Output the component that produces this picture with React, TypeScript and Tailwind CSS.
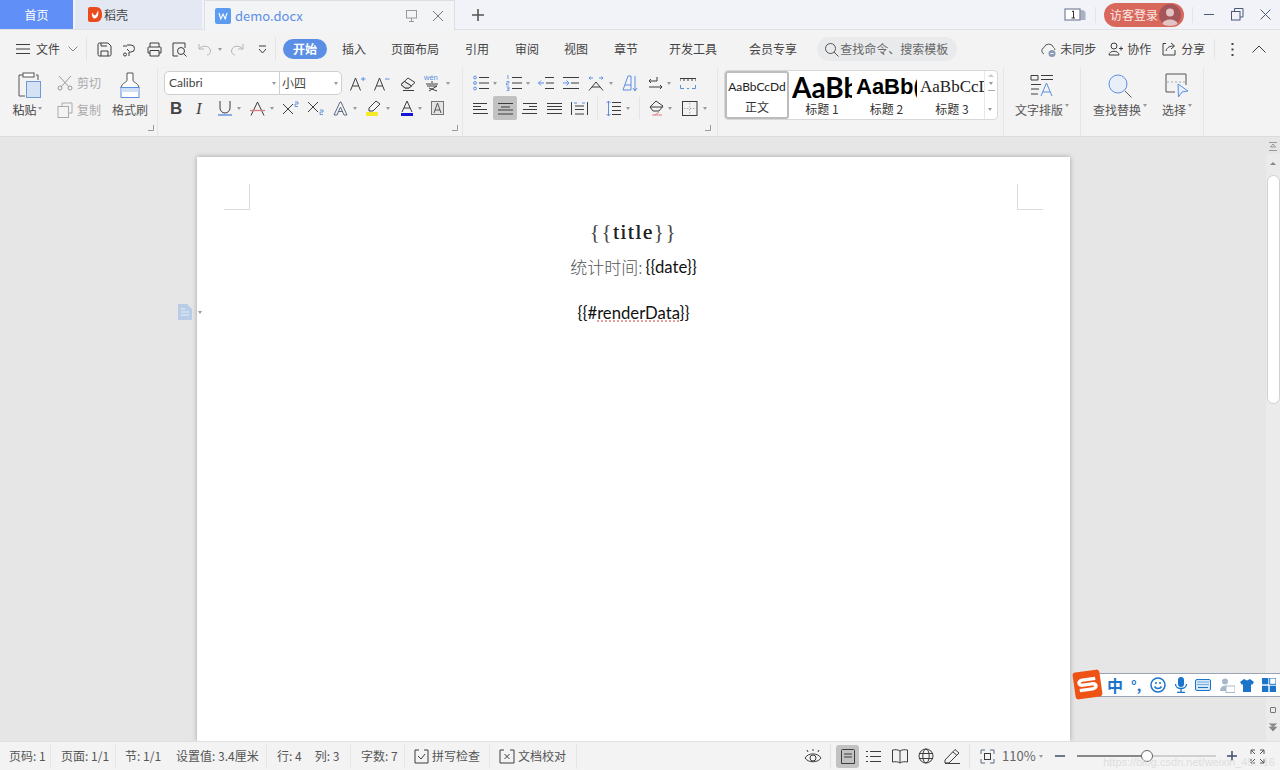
import type { ReactNode } from "react"

const BLUE = "#5b8fe0"
const INK = "#3c3c3c"

function Ic({ w = 16, h = 16, className = "", children }: { w?: number; h?: number; className?: string; children: ReactNode }) {
  return (
    <svg width={w} height={h} viewBox={`0 0 ${w} ${h}`} fill="none" stroke={INK} strokeWidth="1" className={`shrink-0 ${className}`}>
      {children}
    </svg>
  )
}

// small grey dropdown triangle
function Caret({ className = "" }: { className?: string }) {
  return <span className={`inline-block w-0 h-0 shrink-0 border-x-[2.5px] border-x-transparent border-t-[3px] border-t-[#999] ${className}`} />
}

function Sep({ className = "" }: { className?: string }) {
  return <div className={`w-px bg-[#e4e4e4] shrink-0 ${className}`} />
}

function TitleBar() {
  return (
    <div className="h-[30px] flex bg-[#f1f3f8] border-b border-[#dfe1e6] shrink-0">
      <div className="w-[73px] bg-[#5f8ff7] text-white text-[12px] flex items-center justify-center">首页</div>
      <div className="w-[127px] ml-[2px] bg-[#e3e8f2] flex items-center pl-[13px] text-[12px] text-[#444]">
        <svg width="15" height="15" viewBox="0 0 15 15" className="mr-[1px]">
          <path d="M0 2 A2 2 0 0 1 2 0 H8 C12 0 14 3 14 7.5 C14 12 12 15 8 15 H2 A2 2 0 0 1 0 13 Z" fill="#ea4a1c" />
          <path d="M4 5.5 C3.5 9 5 12 7 11.5 C10 10.5 11 7 10 3.5 C9 6 8 7.5 7 8.5 C6 8 5 7 4 5.5 Z" fill="#fff" />
        </svg>
        稻壳
      </div>
      <div className="w-[251px] ml-[2px] h-[30px] bg-[#f3f4f6] border border-b-0 border-[#dcdfe5] flex items-center pl-[10px] pr-[10px] text-[13px] text-[#5b8fe6]">
        <svg width="16" height="16" viewBox="0 0 16 16" className="mr-[4px]">
          <rect width="16" height="16" rx="2" fill="#5b9bf0" />
          <path d="M4 5 L5.8 11 L8 6 L10.2 11 L12 5" stroke="#fff" strokeWidth="1.1" fill="none" />
        </svg>
        demo.docx
        <Ic w={12} h={12} className="ml-auto mr-[14px]">
          <rect x="0.5" y="0.5" width="10" height="7.5" stroke="#999" />
          <path d="M5.5 8 V11 M3 11.5 H8" stroke="#999" />
        </Ic>
        <Ic w={12} h={12}>
          <path d="M1 1 L11 11 M11 1 L1 11" stroke="#777" />
        </Ic>
      </div>
      <Ic w={12} h={12} className="ml-[17px] mt-[9px]">
        <path d="M6 0 V12 M0 6 H12" stroke="#555" strokeWidth="1.6" />
      </Ic>
      <div className="ml-auto flex items-center">
        <svg width="22" height="13" viewBox="0 0 22 13" className="mr-[9px]" fill="none">
          <path d="M16 2 H19 L21.5 4 V12 H16 Z" fill="#a9b1c2" />
          <rect x="1" y="1" width="15" height="11" fill="#fff" stroke="#8a93a8" strokeWidth="1.4" />
          <path d="M8 3.5 L9.5 3 V10 M7.5 10 H11" stroke="#333" />
        </svg>
        <Sep className="h-[16px] mr-[8px]" />
        <div className="w-[80px] h-[24px] rounded-full bg-[#d9685c] flex items-center pl-[6px] text-[12px] text-[#fbe9e6]">
          访客登录
          <svg width="22" height="22" viewBox="0 0 22 22" className="ml-[1px]">
            <circle cx="11" cy="11" r="11" fill="#a5565a" />
            <circle cx="11" cy="8.5" r="4" fill="#e3c3c3" />
            <path d="M3.5 20 C4 14 18 14 18.5 20 C15 22.5 7 22.5 3.5 20 Z" fill="#e3c3c3" />
          </svg>
        </div>
        <Sep className="h-[16px] ml-[8px]" />
        <Ic w={11} h={11} className="ml-[11px]">
          <path d="M0 5.5 H10" stroke="#4a5a78" />
        </Ic>
        <Ic w={13} h={13} className="ml-[16px]">
          <rect x="0.5" y="3.5" width="8.5" height="8.5" stroke="#4a5a78" />
          <path d="M3.5 3.5 V0.5 H12 V9 H9" stroke="#4a5a78" />
        </Ic>
        <Ic w={11} h={11} className="ml-[16px] mr-[9px]">
          <path d="M0.5 0.5 L10.5 10.5 M10.5 0.5 L0.5 10.5" stroke="#4a5a78" />
        </Ic>
      </div>
    </div>
  )
}

function MenuBar() {
  const tabs = [
    { t: "插入", c: "ml-[15px]" },
    { t: "页面布局", c: "ml-[25px]" },
    { t: "引用", c: "ml-[26px]" },
    { t: "审阅", c: "ml-[26px]" },
    { t: "视图", c: "ml-[25px]" },
    { t: "章节", c: "ml-[26px]" },
    { t: "开发工具", c: "ml-[31px]" },
    { t: "会员专享", c: "ml-[32px]" },
  ]
  return (
    <div className="h-[38px] flex items-center text-[12px] text-[#444] shrink-0">
      <Ic w={14} h={12} className="ml-[16px]">
        <path d="M0 1.5 H14 M0 6 H14 M0 10.5 H14" />
      </Ic>
      <span className="ml-[6px] w-[24px]">文件</span>
      <Ic w={10} h={6} className="ml-[8px]">
        <path d="M0.5 0.5 L5 5 L9.5 0.5" stroke="#888" />
      </Ic>
      <Sep className="h-[24px] ml-[8px]" />
      <Ic w={15} h={15} className="ml-[10px]">
        <path d="M1 2.5 A1.5 1.5 0 0 1 2.5 1 H11 L14 4 V12.5 A1.5 1.5 0 0 1 12.5 14 H2.5 A1.5 1.5 0 0 1 1 12.5 Z M4 14 V9 H11 V14 M4 1 V4 H10" />
      </Ic>
      <Ic w={15} h={15} className="ml-[10px]">
        <path d="M5 3 H9 A3.5 3.5 0 0 1 9 10 H7 V14 M1 4 H5 M3 11 A1.5 1.5 0 1 0 3 14 A1.5 1.5 0 1 0 3 11 M5 7 L7 9" />
      </Ic>
      <Ic w={15} h={15} className="ml-[10px]">
        <path d="M3 5 V1 H12 V5 M3 11 H1 V5.5 A1 1 0 0 1 2 5 H13 A1 1 0 0 1 14 5.5 V11 H12 M3 8.5 H12 V14 H3 Z" />
      </Ic>
      <Ic w={15} h={15} className="ml-[10px]">
        <path d="M6 14 H1 V1 H13 V6" />
        <circle cx="9" cy="9" r="3.5" />
        <path d="M11.5 11.5 L14.5 14.5" />
      </Ic>
      <Ic w={14} h={13} className="ml-[11px]">
        <path d="M1 1 V6 H6 M1 6 C4 2 12 2 12.5 8 C12.5 10 11 12 9 12" stroke="#b5b5b5" />
      </Ic>
      <Caret className="ml-[6px]" />
      <Ic w={14} h={13} className="ml-[8px]">
        <path d="M13 1 V6 H8 M13 6 C10 2 2 2 1.5 8 C1.5 10 3 12 5 12" stroke="#b5b5b5" />
      </Ic>
      <Ic w={9} h={9} className="ml-[14px]">
        <path d="M1 1 H8 M1 4 L4.5 8 L8 4" />
      </Ic>
      <Sep className="h-[24px] ml-[8px]" />
      <div className="ml-[7px] w-[44px] h-[20px] rounded-full bg-[#5b8fe6] text-white font-bold flex items-center justify-center">开始</div>
      {tabs.map((x) => (
        <span key={x.t} className={x.c}>{x.t}</span>
      ))}
      <div className="ml-[20px] w-[140px] h-[24px] rounded-full bg-[#e9eaec] flex items-center pl-[7px] text-[#666]">
        <Ic w={15} h={15} className="mr-[1px]">
          <circle cx="6.5" cy="6.5" r="5" stroke="#555" />
          <path d="M10 10 L14.5 14.5" stroke="#555" />
        </Ic>
        查找命令、搜索模板
      </div>
      <Ic w={17} h={15} className="ml-[83px]">
        <path d="M4 12 A3.5 3.5 0 0 1 4 5.5 A5 5 0 0 1 13.5 5.5 A3.5 3.5 0 0 1 15 8" stroke="#555" />
        <circle cx="12" cy="11.5" r="3.5" fill="#8a9bb5" stroke="none" />
        <path d="M10.5 11.5 H13.5" stroke="#fff" />
      </Ic>
      <span className="ml-[3px]">未同步</span>
      <Ic w={15} h={14} className="ml-[12px]">
        <circle cx="6" cy="4" r="3" />
        <path d="M1 13 C1 8 11 8 11 13 Z M11 6.5 H15 M13 4.5 V8.5" />
      </Ic>
      <span className="ml-[4px]">协作</span>
      <Ic w={15} h={14} className="ml-[11px]">
        <path d="M4 1.5 H1 V13 H13 V8 M4 9 C5 5 8 4 12 4 M9 1 L12.5 4 L9 7" />
      </Ic>
      <span className="ml-[4px]">分享</span>
      <Sep className="h-[20px] ml-[9px]" />
      <Ic w={3} h={13} className="ml-[16px]">
        <path d="M1.5 0 V2 M1.5 5.5 V7.5 M1.5 11 V13" stroke="#444" strokeWidth="2" />
      </Ic>
      <Ic w={14} h={8} className="ml-[18px]">
        <path d="M0.5 7.5 L7 1 L13.5 7.5" />
      </Ic>
    </div>
  )
}

function Launcher({ className = "" }: { className?: string }) {
  return (
    <Ic w={6} h={6} className={`absolute bottom-[5px] ${className}`}>
      <path d="M5.5 0 V5.5 H0" stroke="#999" />
    </Ic>
  )
}

function ClipboardGroup() {
  return (
    <div className="relative w-[158px] shrink-0 h-full flex border-r border-[#e6e6e6] text-[12px] text-[#444]">
      <div className="w-[49px] flex flex-col items-center pt-[4px] pl-[10px]">
        <svg width="24" height="27" viewBox="0 0 24 27" fill="none">
          <path d="M6 3 H1 V24 H7" stroke="#555" />
          <path d="M18 3 H20 V8" stroke="#555" />
          <rect x="5" y="1" width="11" height="4" stroke="#555" fill="#fff" />
          <rect x="8.5" y="9.5" width="14" height="16" fill="#d5e2f4" stroke="#6f9ad8" />
        </svg>
        <div className="mt-[2px] flex items-center w-[36px] pl-[1px]">粘贴<Caret className="ml-[1px] mb-[4px]" /></div>
      </div>
      <div className="w-[59px] flex flex-col pl-[8px] text-[#aaa]">
        <div className="h-[26px] mt-[2px] flex items-center">
          <Ic w={16} h={16}>
            <path d="M2 1 L12 12 M14 1 L4 12" stroke="#999" />
            <circle cx="3" cy="13" r="2" stroke="#999" />
            <circle cx="13" cy="13" r="2" stroke="#999" />
          </Ic>
          <span className="ml-[4px]">剪切</span>
        </div>
        <div className="h-[26px] mt-[1px] flex items-center">
          <Ic w={16} h={16}>
            <path d="M5 4 V1 H15 V11 H12" stroke="#aaa" />
            <rect x="1" y="4.5" width="10.5" height="11" stroke="#aaa" />
          </Ic>
          <span className="ml-[4px]">复制</span>
        </div>
      </div>
      <div className="flex flex-col items-center w-[44px] pt-[4px]">
        <svg width="20" height="27" viewBox="0 0 20 27" fill="none">
          <path d="M7 1 H13 V8 C13 11 18 10 19 16 H1 C2 10 7 11 7 8 Z" stroke="#555" fill="#fff" />
          <rect x="1" y="15.5" width="18" height="10" stroke="#5b8fe0" fill="#fff" />
          <rect x="1.5" y="16" width="17" height="4" fill="#cfdff5" />
        </svg>
        <span className="mt-[2px] whitespace-nowrap text-[#555]">格式刷</span>
      </div>
      <Launcher className="right-[3px]" />
    </div>
  )
}

function FontGroup() {
  return (
    <div className="relative w-[305px] shrink-0 h-full border-r border-[#e6e6e6] pl-[6px] text-[#444]">
      <div className="flex items-center h-[24px] mt-[3px]">
        <div className="w-[178px] h-[24px] bg-white border border-[#cfcfcf] rounded-[5px] flex items-center text-[12px]">
          <div className="w-[115px] h-full flex items-center pl-[4px] border-r border-[#cfcfcf] font-['Lato','Liberation_Sans',sans-serif]">
            Calibri
            <Caret className="ml-auto mr-[3px]" />
          </div>
          <div className="flex-1 h-full flex items-center pl-[2px]">
            小四
            <Caret className="ml-auto mr-[3px]" />
          </div>
        </div>
        <Ic w={16} h={15} className="ml-[8px]">
          <path d="M0.5 14.5 L5.5 2 L10.5 14.5 M2.5 10 H8.5" />
          <path d="M11 3 H15.5 M13.2 1 V5" stroke={BLUE} />
        </Ic>
        <Ic w={16} h={15} className="ml-[8px]">
          <path d="M0.5 14.5 L5.5 2 L10.5 14.5 M2.5 10 H8.5" />
          <path d="M11 3 H15.5" stroke={BLUE} />
        </Ic>
        <Ic w={16} h={15} className="ml-[10px]">
          <path d="M1 8.5 L8 2 L15 6.5 L9 12 H5 Z M4.5 5.5 L11.5 10" />
          <path d="M1 8.5 L5 12 H9 L11.5 10 L4.5 5.5 Z" fill="#e8e8e8" />
          <path d="M3 14.5 H14" />
        </Ic>
        <svg width="17" height="18" viewBox="0 0 17 18" fill="none" className="ml-[8px]">
          <text x="0" y="6" fontSize="7.5" fill={BLUE} stroke="none" fontFamily="Liberation Sans">wén</text>
          <path d="M8 7 V9 M2 10 H14 M3 12 H13 L5 17 M5 14 L13 17" stroke={INK} />
        </svg>
        <Caret className="ml-[5px]" />
      </div>
      <div className="flex items-center h-[24px] mt-[1px]">
        <span className="ml-[6px] w-[12px] font-bold text-[17px] leading-none font-['Liberation_Sans',sans-serif]">B</span>
        <span className="ml-[14px] w-[10px] italic text-[17px] leading-none font-['Liberation_Serif',serif]">I</span>
        <Ic w={14} h={16} className="ml-[12px]">
          <path d="M2 1 V8 A5 5 0 0 0 12 8 V1" />
          <path d="M0 15 H14" stroke={BLUE} strokeWidth="1.4" />
        </Ic>
        <Caret className="ml-[5px]" />
        <Ic w={15} h={15} className="ml-[9px]">
          <path d="M1 14.5 L7.5 1 L14 14.5" />
          <path d="M0 9.5 H15" stroke="#d98080" strokeWidth="1.3" />
        </Ic>
        <Caret className="ml-[5px]" />
        <Ic w={17} h={14} className="ml-[8px]">
          <path d="M1 3 L11 13 M11 3 L1 13" />
          <path d="M13 1 H16 V3 H13 V5.5 H16" stroke={BLUE} strokeWidth="0.9" />
        </Ic>
        <Ic w={17} h={15} className="ml-[8px]">
          <path d="M1 1 L11 11 M11 1 L1 11" />
          <path d="M13 9 H16 V11 H13 V13.5 H16" stroke={BLUE} strokeWidth="0.9" />
        </Ic>
        <Ic w={15} h={15} className="ml-[9px]">
          <path d="M1 14 L7 1 H8 L14 14 H11 L7.5 6 L4 14 Z M5 10.5 H10" stroke="#5f6b85" />
        </Ic>
        <Caret className="ml-[5px]" />
        <Ic w={15} h={16} className="ml-[9px]">
          <path d="M3 8 L10 1 L14 4 L7 11 H3 Z" />
          <rect x="0" y="12" width="12" height="4" fill="#f5ea2a" stroke="none" />
        </Ic>
        <Caret className="ml-[5px]" />
        <Ic w={12} h={16} className="ml-[11px]">
          <path d="M1 12 L6 1 L11 12 M3 8 H9" />
          <rect x="0" y="13" width="12" height="3" fill="#1616d8" stroke="none" />
        </Ic>
        <Caret className="ml-[5px]" />
        <Ic w={13} h={14} className="ml-[9px]">
          <rect x="0.5" y="0.5" width="12" height="13" stroke="#777" fill="#e4e4e4" />
          <path d="M3 12 L6.5 2 L10 12 M4 9 H9" stroke="#555" />
        </Ic>
      </div>
      <Launcher className="right-[4px]" />
    </div>
  )
}

function ListIc({ marks, className = "" }: { marks: ReactNode; className?: string }) {
  return (
    <Ic w={17} h={16} className={className}>
      {marks}
      <path d="M6 2.5 H16 M6 8 H16 M6 13.5 H16" />
    </Ic>
  )
}

function AlignIc({ d, className = "" }: { d: string; className?: string }) {
  return (
    <Ic w={15} h={13} className={className}>
      <path d={d} />
    </Ic>
  )
}

function ParagraphGroup() {
  const dots = (
    <>
      <circle cx="2" cy="2.5" r="1.4" stroke={BLUE} />
      <circle cx="2" cy="8" r="1.4" stroke={BLUE} />
      <circle cx="2" cy="13.5" r="1.4" stroke={BLUE} />
    </>
  )
  const nums = (
    <path d="M1 1 L2 0.5 V4 M0.5 6.5 H3 V8 H0.5 V10 H3 M0.5 12 H3 V15.5 H0.5 M1 13.7 H3" stroke={BLUE} strokeWidth="0.8" />
  )
  return (
    <div className="relative w-[255px] shrink-0 h-full border-r border-[#e6e6e6] pl-[10px]">
      <div className="flex items-center h-[24px] mt-[3px]">
        <ListIc marks={dots} />
        <Caret className="ml-[3px]" />
        <ListIc marks={nums} className="ml-[9px]" />
        <Caret className="ml-[3px]" />
        <Ic w={16} h={14} className="ml-[8px]">
          <path d="M7 1.5 H16 M7 12.5 H16 M8 7 H16" />
          <path d="M0.5 7 H6 M3 4.5 L0.5 7 L3 9.5" stroke={BLUE} />
        </Ic>
        <Ic w={16} h={14} className="ml-[9px]">
          <path d="M0 1.5 H16 M0 12.5 H16 M8 7 H16" />
          <path d="M0 7 H6 M3.5 4.5 L6 7 L3.5 9.5" stroke={BLUE} />
        </Ic>
        <Ic w={16} h={15} className="ml-[9px]">
          <path d="M1 14.5 L8 6 L15 14.5 M4 11 H12" />
          <path d="M1 2 H5 M11 2 H15 M2.5 0.5 L1 2 L2.5 3.5 M13.5 0.5 L15 2 L13.5 3.5" stroke={BLUE} />
        </Ic>
        <Caret className="ml-[5px]" />
        <Ic w={16} h={17} className="ml-[9px]">
          <path d="M1 15 L6 1 H9 V15 Z M3 10 H9" stroke={BLUE} />
          <path d="M13 1 V16 M11 13 L13 16 L15 13" stroke={BLUE} />
        </Ic>
        <Ic w={16} h={15} className="ml-[10px]">
          <path d="M9 1 V5 H1 M3 3 L1 5 L3 7 M1 11 H14 M12 9 L14 11 L12 13" />
        </Ic>
        <Caret className="ml-[3px]" />
        <Ic w={16} h={11} className="ml-[9px]">
          <path d="M0 0.5 H16 M0 0.5 V3 M4 0.5 V3 M8 0.5 V3 M12 0.5 V3 M16 0.5 V3" />
          <path d="M0.5 7 V10.5 H4 M15.5 7 V10.5 H12 M7 10.5 H9" stroke={BLUE} />
        </Ic>
      </div>
      <div className="flex items-center h-[24px] mt-[1px]">
        <AlignIc d="M0 1.5 H14 M0 4.5 H8 M0 7.5 H14 M0 11.5 H15" />
        <div className="w-[24px] h-[24px] ml-[5px] rounded-[2px] bg-[#c2c2c2] flex items-center justify-center">
          <AlignIc d="M0 1.5 H15 M3 5 H12 M0 8 H15 M0 12 H15" />
        </div>
        <AlignIc d="M1 1.5 H15 M7 4.5 H15 M1 7.5 H15 M0 11.5 H15" className="ml-[5px]" />
        <AlignIc d="M0 1.5 H15 M0 4.5 H15 M0 7.5 H15 M0 11.5 H15" className="ml-[10px]" />
        <Ic w={17} h={15} className="ml-[9px]">
          <path d="M0.5 1 V14 M16.5 1 V14 M4 5 H13 M4 8.5 H13 M4 13 H13" />
          <path d="M3 2 H6 M11 2 H14" stroke={BLUE} />
        </Ic>
        <Sep className="h-[22px] ml-[9px]" />
        <Ic w={15} h={17} className="ml-[8px]">
          <path d="M6 2.5 H15 M6 6.5 H15 M6 10.5 H15 M6 14.5 H15" />
          <path d="M2.5 1 V16 M0.5 3 L2.5 1 L4.5 3 M0.5 14 L2.5 16 L4.5 14" stroke={BLUE} />
        </Ic>
        <Caret className="ml-[5px]" />
        <Sep className="h-[22px] ml-[9px]" />
        <Ic w={16} h={16} className="ml-[9px]">
          <path d="M1 7 L7 1 L14 6 L10 11 H4 Z M1 7 H14" />
          <path d="M3 15 H13 M6 15 L10 12" stroke="#d98080" />
        </Ic>
        <Caret className="ml-[3px]" />
        <Ic w={16} h={15} className="ml-[10px]">
          <rect x="0.5" y="0.5" width="14.5" height="14" />
          <path d="M7.7 2 V13 M2 7.5 H13.5" stroke="#aaa" strokeDasharray="1.5 1.5" />
        </Ic>
        <Caret className="ml-[5px]" />
      </div>
      <Launcher className="right-[6px]" />
    </div>
  )
}

function StyleGallery() {
  const label = "text-[12px] leading-none text-[#333] shrink-0"
  return (
    <div className="ml-[6px] mt-[2px] w-[274px] h-[50px] shrink-0 bg-white border border-[#d8d8d8] rounded-[4px] flex">
      <div className="w-[64px] h-[48px] border-2 border-[#bcbcbc] rounded-[3px] flex flex-col items-center overflow-hidden">
        <span className="text-[12px] leading-[16px] mt-[6px] font-['Lato','Liberation_Sans',sans-serif] text-[#222]">AaBbCcDd</span>
        <span className="text-[12px] leading-none text-[#333] mt-[6px]">正文</span>
      </div>
      <div className="w-[60px] ml-[3px] flex flex-col items-center overflow-hidden">
        <span className="h-[32px] self-start text-[28px] leading-[32px] font-bold text-black whitespace-nowrap font-['Lato','Liberation_Sans',sans-serif]">AaBb</span>
        <span className={label}>标题 1</span>
      </div>
      <div className="w-[61px] ml-[4px] flex flex-col items-center overflow-hidden">
        <span className="h-[32px] self-start text-[22px] leading-[32px] font-bold text-black whitespace-nowrap font-['Liberation_Sans',sans-serif]">AaBb(</span>
        <span className={label}>标题 2</span>
      </div>
      <div className="w-[64px] ml-[3px] flex flex-col items-center overflow-hidden">
        <span className="h-[32px] self-start text-[17px] leading-[32px] text-[#222] whitespace-nowrap font-['Liberation_Serif',serif]">AaBbCcD</span>
        <span className={label}>标题 3</span>
      </div>
      <div className="w-[13px] ml-auto border-l border-[#e8e8e8] flex flex-col items-center justify-around text-[#bbb]">
        <span className="w-0 h-0 border-x-[3px] border-x-transparent border-b-[3px] border-b-[#ccc]" />
        <Caret />
        <span className="w-[7px] border-t border-[#aaa] pt-[1px]"><Caret className="block mx-auto" /></span>
      </div>
    </div>
  )
}

function BigButton({ label, width, children }: { label: string; width: string; children: ReactNode }) {
  return (
    <div className={`flex flex-col items-center shrink-0 pt-[4px] text-[12px] text-[#555] ${width}`}>
      <div className="h-[27px] flex items-center">{children}</div>
      <div className="mt-[2px] flex whitespace-nowrap">{label}<Caret className="ml-[2px] mt-[3px]" /></div>
    </div>
  )
}

function Ribbon() {
  return (
    <div className="h-[69px] flex shrink-0 border-b border-[#dcdcdc] shadow-[0_1px_2px_rgba(0,0,0,0.06)] relative">
      <ClipboardGroup />
      <FontGroup />
      <ParagraphGroup />
      <StyleGallery />
      <div className="ml-[5px] w-[78px] border-x border-[#e6e6e6] h-full flex justify-center shrink-0">
        <BigButton label="文字排版" width="w-[68px]">
          <Ic w={24} h={23}>
            <path d="M1 1.5 H8 V6 H1 Z M11 1.5 H23 M11 5.5 H23 M1 10.5 H11 M1 15 H9 M1 20 H8" />
            <path d="M11 22 L16.5 9 L22 22 M13 18 H20" stroke={BLUE} />
          </Ic>
        </BigButton>
      </div>
      <div className="w-[123px] border-r border-[#e6e6e6] h-full flex pl-[10px] shrink-0">
        <BigButton label="查找替换" width="w-[58px]">
          <Ic w={24} h={24}>
            <circle cx="10" cy="10" r="9" stroke={BLUE} fill="#e8eff9" />
            <path d="M17 17 L23.5 23.5" stroke="#555" />
          </Ic>
        </BigButton>
        <BigButton label="选择" width="w-[36px] ml-[10px]">
          <Ic w={24} h={25}>
            <path d="M1 14 V1 H21 V12 M1 14 V19 H10" stroke="#555" />
            <path d="M2 9 H20" stroke="#aaa" strokeDasharray="2 2" />
            <path d="M13 11 L23 18 L17 19 L13.5 24 Z" stroke={BLUE} fill="#e8eff9" />
          </Ic>
        </BigButton>
      </div>
    </div>
  )
}

function Scrollbar() {
  return (
    <div className="w-[14px] ml-auto shrink-0 flex flex-col items-center relative">
      <div className="h-[17px] w-full bg-[#e6e6e6] flex justify-center pt-[5px]">
        <Ic w={8} h={9}>
          <path d="M0 0.5 H8 M0 8.5 H8 M4 2 L1.5 5 H6.5 Z" stroke="#999" />
        </Ic>
      </div>
      <div className="flex-1 w-full bg-[#ebebeb] flex flex-col items-center">
        <span className="mt-[8px] w-0 h-0 border-x-[3px] border-x-transparent border-b-[3px] border-b-[#888]" />
        <div className="mt-[10px] w-[13px] h-[229px] bg-white border border-[#cfcfcf] rounded-full" />
        <div className="mt-auto w-[6px] h-[6px] border border-[#777] rounded-[1px] mb-[10px]" />
        <Ic w={8} h={9} className="mb-[9px]">
          <path d="M0.5 0.5 L4 3.5 L7.5 0.5 M0.5 4 L4 8 L7.5 4 Z" stroke="#888" fill="#888" />
        </Ic>
      </div>
    </div>
  )
}

function Page() {
  return (
    <div className="relative ml-[197px] mt-[20px] w-[873px] shrink-0 bg-white shadow-[0_0_5px_rgba(0,0,0,0.3)] flex flex-col items-center">
      <div className="absolute left-[27px] top-[27px] w-[26px] h-[26px] border-r border-b border-[#dcdcdc]" />
      <div className="absolute right-[27px] top-[27px] w-[26px] h-[26px] border-l border-b border-[#dcdcdc]" />
      <div className="mt-[60px] h-[30px] leading-[30px] text-[21px] tracking-[1.6px] font-['Liberation_Serif',serif] text-[#222]">
        <span className="font-normal text-[#444]">{"{{"}</span>
        <span className="[text-shadow:0_0_0.5px_#111]">title</span>
        <span className="font-normal text-[#444]">{"}}"}</span>
      </div>
      <div className="mt-[5px] h-[30px] leading-[30px] text-[16.7px] text-[#111] flex font-['Lato','Noto_Sans_CJK_SC',sans-serif]">
        <span className="font-light text-[17px] text-[#555] font-['Noto_Sans_CJK_SC',sans-serif] mr-[3px]">统计时间:</span>
        <span>{"{{date}}"}</span>
      </div>
      <div className="mt-[16px] h-[30px] leading-[30px] text-[16.7px] text-[#111] font-['Lato',sans-serif]">
        {"{{#"}
        <span className="underline decoration-dotted decoration-[#e08080] underline-offset-2">renderData</span>
        {"}}"}
      </div>
    </div>
  )
}

function ImeBar() {
  const blue = "#1b74c9"
  return (
    <div className="absolute right-0 top-[536px] h-[24px] w-[188px] flex items-center bg-white border-y border-l border-[#9aa4b5]">
      <div className="absolute -left-[19px] -top-[3px] w-[27px] h-[27px] bg-[#ee5215] rounded-[3px] rotate-[-8deg] flex items-center justify-center">
        <svg width="21" height="15" viewBox="0 0 21 15" fill="none">
          <path d="M19 2.5 H6 C1 2.5 1 7.5 6 7.5 H15 C20 7.5 20 12.5 15 12.5 H2" stroke="#fff" strokeWidth="3.4" />
        </svg>
      </div>
      <span className="ml-[14px] w-[16px] text-[16px] leading-none font-bold" style={{ color: blue }}>中</span>
      <span className="ml-[8px] w-[14px] text-[14px] font-bold leading-none" style={{ color: blue }}>°,</span>
      <svg width="16" height="16" viewBox="0 0 16 16" fill="none" stroke={blue} strokeWidth="1.5" className="ml-[5px]">
        <circle cx="8" cy="8" r="7" />
        <path d="M4.5 9.5 C6 12 10 12 11.5 9.5 M6 5 V7 M10 5 V7" />
      </svg>
      <svg width="14" height="16" viewBox="0 0 14 16" fill={blue} className="ml-[8px]">
        <rect x="4" y="0" width="6" height="10" rx="3" />
        <path d="M1.5 7 C1.5 13 12.5 13 12.5 7 M7 12 V15 M3 15.5 H11" stroke={blue} strokeWidth="1.3" fill="none" />
      </svg>
      <svg width="16" height="12" viewBox="0 0 16 12" className="ml-[7px]" fill="none">
        <rect x="0.5" y="0.5" width="15" height="11" rx="1.5" stroke={blue} fill="#d5e6f7" />
        <path d="M2.5 3 H13.5 M2.5 5.5 H13.5" stroke={blue} strokeDasharray="1 1" />
        <path d="M3 8.5 H13" stroke={blue} />
      </svg>
      <svg width="16" height="15" viewBox="0 0 16 15" className="ml-[8px]" fill="#a8b8ca">
        <circle cx="6" cy="3.5" r="3" />
        <path d="M1 13 C1 6 11 6 11 13 Z" />
        <rect x="7" y="8" width="9" height="6.5" fill="#fff" stroke="#a8b8ca" />
      </svg>
      <svg width="14" height="13" viewBox="0 0 14 13" className="ml-[5px]" fill={blue}>
        <path d="M4 0 L7 1.5 L10 0 L14 3 L12 6 L11 5 V13 H3 V5 L2 6 L0 3 Z" />
      </svg>
      <svg width="14" height="14" viewBox="0 0 14 14" className="ml-[8px]" fill={blue}>
        <rect x="0" y="0" width="6.3" height="6.3" />
        <rect x="7.7" y="0" width="6.3" height="6.3" fill="none" stroke={blue} />
        <rect x="0" y="7.7" width="6.3" height="6.3" />
        <rect x="7.7" y="7.7" width="6.3" height="6.3" />
      </svg>
    </div>
  )
}

function Main() {
  return (
    <div className="relative flex-1 min-h-0 flex bg-[#e6e6e6] overflow-hidden">
      <Page />
      <Scrollbar />
      {/* margin marker next to the page */}
      <div className="absolute left-[178px] top-[167px] flex items-center">
        <svg width="14" height="16" viewBox="0 0 14 16">
          <path d="M0 0 H9 L14 5 V16 H0 Z" fill="#b9cde8" />
          <path d="M3 5 H7 M3 8 H11 M3 11 H11" stroke="#e6eef8" />
        </svg>
        <Caret className="ml-[6px]" />
      </div>
      <ImeBar />
    </div>
  )
}

function StatusBar() {
  const sep = "h-[25px] border-r border-[#e6e6e6] flex items-center shrink-0"
  return (
    <div className="relative h-[29px] bg-[#f3f3f3] border-t border-[#e0e0e0] flex items-center text-[12px] text-[#555] shrink-0">
      <div className={`${sep} w-[51px] pl-[9px]`}>页码: 1</div>
      <div className={`${sep} w-[65px] pl-[10px]`}>页面: 1/1</div>
      <div className={`${sep} w-[151px] pl-[9px]`}>
        <span>节: 1/1</span>
        <span className="ml-[15px]">设置值: 3.4厘米</span>
      </div>
      <div className={`${sep} w-[84px] pl-[10px]`}>
        <span>行: 4</span>
        <span className="ml-[13px]">列: 3</span>
      </div>
      <div className={`${sep} w-[54px] pl-[10px]`}>字数: 7</div>
      <div className={`${sep} w-[85px] pl-[9px]`}>
        <Ic w={15} h={15}>
          <path d="M5 1 H1 V14 H14 V1 H10 M4 7 L7 10 L11 5" />
        </Ic>
        <span className="ml-[3px]">拼写检查</span>
      </div>
      <div className={`${sep} w-[87px] pl-[9px]`}>
        <Ic w={16} h={15}>
          <path d="M5 1 H1 V14 H15 V1 H11 M5.5 5 L10.5 10 M10.5 5 L5.5 10" />
        </Ic>
        <span className="ml-[3px]">文档校对</span>
      </div>
      <div className="ml-auto flex items-center">
        <Ic w={18} h={15}>
          <path d="M1 9 C4 3.5 14 3.5 17 9 C14 14 4 14 1 9 Z M3 1 L4 3 M9 0 V2 M15 1 L14 3" />
          <circle cx="9" cy="9" r="3" />
        </Ic>
        <Sep className="h-[25px] ml-[8px]" />
        <div className="ml-[5px] w-[23px] h-[23px] bg-[#c2c2c2] rounded-[3px] flex items-center justify-center">
          <Ic w={14} h={15}>
            <path d="M0.5 1.5 A1 1 0 0 1 1.5 0.5 H12.5 A1 1 0 0 1 13.5 1.5 V14.5 H0.5 Z M3 5 H11 M3 8 H11" />
          </Ic>
        </div>
        <Ic w={15} h={13} className="ml-[7px]">
          <path d="M4 1.5 H15 M4 6.5 H15 M4 11.5 H15 M0 1.5 H2 M0 6.5 H2 M0 11.5 H2" />
        </Ic>
        <Ic w={16} h={15} className="ml-[11px]">
          <path d="M8 2 C6 0.5 3 0.5 0.5 1 V13 C3 12.5 6 12.5 8 14 C10 12.5 13 12.5 15.5 13 V1 C13 0.5 10 0.5 8 2 V14" />
        </Ic>
        <Ic w={16} h={16} className="ml-[10px]">
          <circle cx="8" cy="8" r="7" />
          <ellipse cx="8" cy="8" rx="3.2" ry="7" />
          <path d="M1 5.5 H15 M1 10.5 H15" />
        </Ic>
        <Ic w={17} h={16} className="ml-[10px]">
          <path d="M1 12 L11 1.5 L15 5 L5 15 H1 Z M9 4 L13 7.5 M1 15.5 H16" />
        </Ic>
        <Sep className="h-[25px] ml-[8px]" />
        <Ic w={15} h={15} className="ml-[10px]">
          <path d="M1 5 V1 H5 M10 1 H14 V5 M1 10 V14 H5 M14 10 V14 H10" stroke="#5a6a85" />
          <rect x="4.5" y="4.5" width="6" height="6" />
        </Ic>
        <span className="ml-[7px] w-[32px] text-[13px] text-[#666]">110%</span>
        <Caret className="ml-[5px]" />
        <Ic w={10} h={2} className="ml-[12px]">
          <path d="M0 1 H10" stroke="#3e4d68" strokeWidth="1.5" />
        </Ic>
        <div className="ml-[12px] w-[139px] h-[2px] bg-[#cfcfcf] relative">
          <div className="w-[70px] h-full bg-[#888]" />
          <div className="absolute left-[64px] -top-[5px] w-[12px] h-[12px] rounded-full bg-white border border-[#666]" />
        </div>
        <Ic w={10} h={10} className="ml-[11px]">
          <path d="M5 0 V10 M0 5 H10" stroke="#3e4d68" strokeWidth="1.5" />
        </Ic>
        <Ic w={15} h={15} className="ml-[13px] mr-[15px]">
          <path d="M1 5 V1 H5 M1 1 L5 5 M14 5 V1 H10 M14 1 L10 5 M1 10 V14 H5 M1 14 L5 10 M14 10 V14 H10 M14 14 L10 10" stroke="#555" />
        </Ic>
      </div>
      <span className="absolute right-[5px] bottom-[1px] text-[11px] leading-[14px] text-[#dedede] font-['Liberation_Sans',sans-serif]">https://blog.csdn.net/weixin_45...16</span>
    </div>
  )
}

export default function App() {
  return (
    <div className="w-[1280px] h-[770px] overflow-hidden flex flex-col bg-[#f3f3f4] font-['Noto_Sans_CJK_SC','Liberation_Sans',sans-serif]">
      <TitleBar />
      <MenuBar />
      <Ribbon />
      <Main />
      <StatusBar />
    </div>
  )
}
